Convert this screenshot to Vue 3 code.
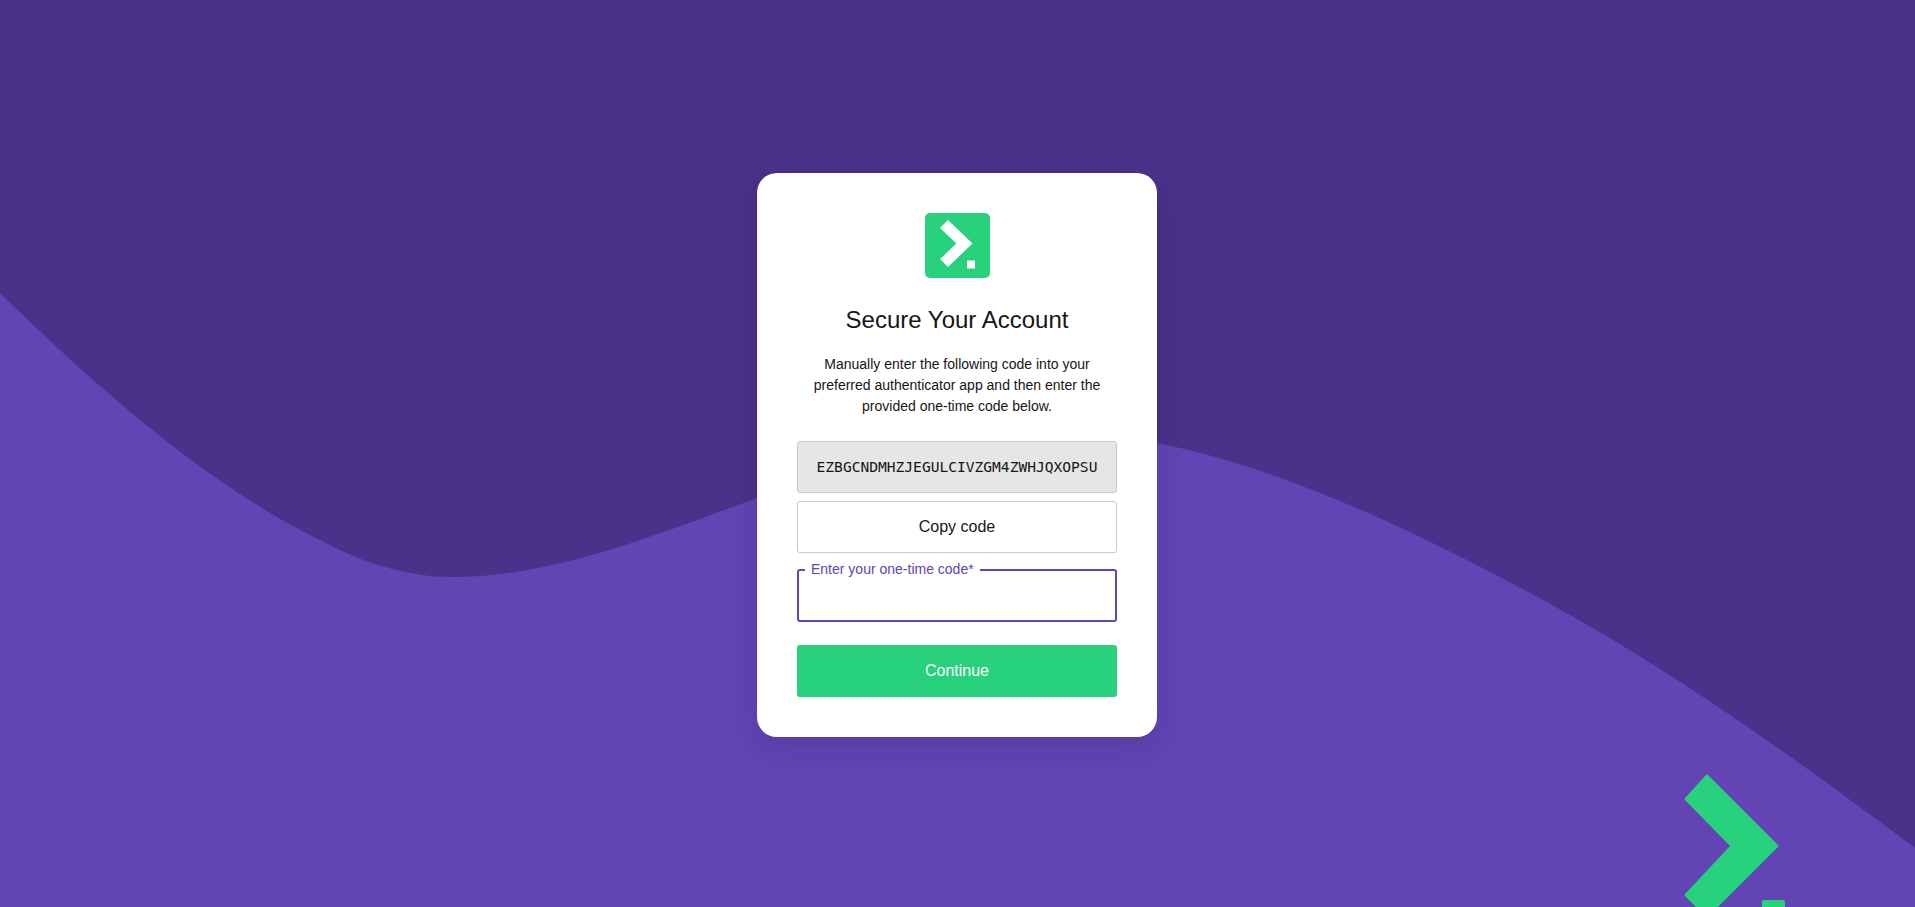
<template>
  <div class="page">
    <svg class="backdrop" viewBox="0 0 1915 907" preserveAspectRatio="none" aria-hidden="true">
      <rect width="1915" height="907" fill="#4a318a" />
      <path
        d="M0 293 C106.7 397 213.3 488 320 540 C364 564 410 577 452 577 C554.7 577 657.3 534 760 497 C892.3 449.4 1024.7 416.5 1157 443 C1285.7 468.7 1414.3 530.5 1543 600 C1667 667 1791 755 1915 848 L1915 907 L0 907 Z"
        fill="#6244b5"
      />
    </svg>

    <svg class="corner-logo" viewBox="0 0 114 160" aria-hidden="true">
      <path
        d="M24 1 L94 71 Q95 72 94 73 L24 143 Q23 144 22 143 L1 122 Q0 121 1 120 L46 72 L1 26 Q0 25 1 24 L22 1 Q23 0 24 1 Z"
        fill="#28d17c"
      />
      <rect x="78" y="126" width="23" height="23" rx="2" fill="#28d17c" />
    </svg>

    <main class="card">
      <svg class="logo" viewBox="0 0 65 65" role="img" aria-label="Logo">
        <rect width="65" height="65" rx="5" fill="#28d17c" />
        <path d="M23 7 L47.5 30.5 L23 54 L15 46 L31.5 30.5 L15 15 Z" fill="#fff" />
        <rect x="42" y="47.5" width="8" height="8" fill="#fff" />
      </svg>

      <h1>Secure Your Account</h1>
      <p>
        Manually enter the following code into your preferred authenticator app and then enter
        the provided one-time code below.
      </p>

      <div class="secret">{{ secret }}</div>
      <button class="copy" type="button" @click="copyCode">Copy code</button>

      <div class="field">
        <label for="otp">Enter your one-time code*</label>
        <input id="otp" v-model="code" type="text" autocomplete="off" />
      </div>

      <button class="submit" type="button">Continue</button>
    </main>
  </div>
</template>

<script setup>
import { ref } from 'vue'

const secret = 'EZBGCNDMHZJEGULCIVZGM4ZWHJQXOPSU'
const code = ref('')

function copyCode() {
  navigator.clipboard?.writeText(secret)
}
</script>

<style>
html,
body {
  margin: 0;
  height: 100%;
  overflow: hidden;
}
</style>

<style scoped>
.page {
  position: relative;
  box-sizing: border-box;
  height: 907px;
  padding: 173px 1px 0 0;
  overflow: hidden;
  display: flex;
  justify-content: center;
  align-items: flex-start;
  font-family: "Liberation Sans", Arial, sans-serif;
  color: #161616;
}

.backdrop {
  position: absolute;
  inset: 0;
  width: 100%;
  height: 100%;
}

.corner-logo {
  position: absolute;
  left: 1684px;
  top: 774px;
  width: 114px;
  height: 160px;
}

.card {
  position: relative;
  box-sizing: border-box;
  width: 400px;
  height: 564px;
  padding: 40px;
  display: flex;
  flex-direction: column;
  align-items: stretch;
  background: #fff;
  border-radius: 20px;
  box-shadow: 0 10px 30px rgba(0, 0, 0, 0.12);
}

.logo {
  display: block;
  width: 65px;
  height: 65px;
  align-self: center;
}

h1 {
  margin: 28px 0 0;
  font-size: 24px;
  font-weight: 400;
  line-height: 28px;
  text-align: center;
}

p {
  margin: 20px 0 0;
  font-size: 14px;
  line-height: 21px;
  text-align: center;
}

.secret,
.copy {
  box-sizing: border-box;
  height: 52px;
  border: 1px solid #c9c9c9;
  border-radius: 3px;
}

.secret {
  margin-top: 24px;
  background: #e6e6e6;
  font-family: "DejaVu Sans Mono", monospace;
  font-size: 14.58px;
  line-height: 50px;
  text-align: center;
}

.copy {
  margin-top: 8px;
  background: #fff;
  color: inherit;
  font: 16px "Liberation Sans", Arial, sans-serif;
}

.field {
  position: relative;
  margin-top: 16px;
}

.field label {
  position: absolute;
  left: 8px;
  top: -8px;
  padding: 0 6px;
  background: #fff;
  color: #6244b5;
  font-size: 14px;
  line-height: 16px;
}

.field input {
  display: block;
  box-sizing: border-box;
  width: 100%;
  height: 53px;
  padding: 0 14px;
  border: 2px solid #6244b5;
  border-radius: 3px;
  outline: none;
  background: #fff;
  font: 16px "Liberation Sans", Arial, sans-serif;
}

.submit {
  height: 52px;
  margin-top: 23px;
  border: 0;
  border-radius: 3px;
  background: #28d17c;
  color: #fff;
  font: 16px "Liberation Sans", Arial, sans-serif;
}
</style>
